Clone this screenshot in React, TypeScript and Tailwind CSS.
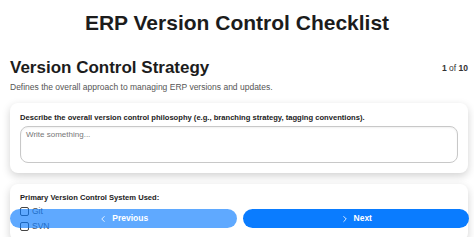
import React, { useState } from 'react';
import { ChevronLeft, ChevronRight } from 'lucide-react';

const options = ['Git', 'SVN'];

const App = () => {
  const [notes, setNotes] = useState('');
  const [picked, setPicked] = useState<string[]>([]);

  const toggle = (name: string) => {
    setPicked((p) => (p.includes(name) ? p.filter((x) => x !== name) : [...p, name]));
  };

  return (
    <div className="min-h-screen bg-white font-['Liberation_Sans',Arial,sans-serif] text-[#222]">
      {/* Page title */}
      <h1 className="pt-[10px] text-center text-[21px] font-bold leading-[25px] text-[#1c1c1c]">
        ERP Version Control Checklist
      </h1>

      <div className="pl-[10px] pr-[6px]">
        {/* Section header */}
        <div className="mt-[23px] flex items-center justify-between">
          <h2 className="text-[17px] font-bold leading-[20px] text-[#1c1c1c]">Version Control Strategy</h2>
          <span className="text-[8.5px] text-[#333]">
            <b>1</b> of <b>10</b>
          </span>
        </div>
        <p className="mt-[4px] text-[8.5px] leading-[11px] text-[#555]">
          Defines the overall approach to managing ERP versions and updates.
        </p>

        {/* Question 1 */}
        <div className="mt-[10px] rounded-lg bg-white px-[10px] pt-[10px] pb-[10px] shadow-[0_3px_8px_rgba(0,0,0,0.18)]">
          <label className="block text-[7.6px] font-bold leading-[10px] text-[#222]">
            Describe the overall version control philosophy (e.g., branching strategy, tagging conventions).
          </label>
          <textarea
            value={notes}
            onChange={(e) => setNotes(e.target.value)}
            placeholder="Write something..."
            className="mt-[3px] block h-[37px] w-full resize-none rounded-lg border border-[#c8c8c8] px-[5px] py-[3px] text-[8px] leading-[10px] text-[#333] placeholder:text-[#777] shadow-[inset_0_1px_2px_rgba(0,0,0,0.06)] outline-none"
          />
        </div>

        {/* Question 2 */}
        <div className="mt-[11px] rounded-lg bg-white px-[10px] pt-[9px] pb-[10px] shadow-[0_3px_8px_rgba(0,0,0,0.18)]">
          <p className="text-[7.6px] font-bold leading-[10px] text-[#222]">Primary Version Control System Used:</p>
          <div className="mt-[4px] flex flex-col gap-[5.5px]">
            {options.map((o) => (
              <label key={o} className="flex items-center gap-[3px] text-[8.5px] leading-[9px] text-[#555]">
                <span
                  onClick={() => toggle(o)}
                  className={`h-[9px] w-[9px] rounded-[2px] border border-[#444] ${picked.includes(o) ? 'bg-[#0a7cff]' : 'bg-white'}`}
                />
                {o}
              </label>
            ))}
          </div>
        </div>
      </div>

      {/* Navigation */}
      <div className="fixed bottom-[9px] left-[10px] right-[5px] flex gap-[6px]">
        <button className="flex h-[19px] flex-1 items-center justify-center gap-[4px] rounded-full bg-[#0a7cff] text-[8.5px] font-bold text-white opacity-[0.65]">
          <ChevronLeft size={10} strokeWidth={2} />
          Previous
        </button>
        <button className="flex h-[19px] flex-1 items-center justify-center gap-[4px] rounded-full bg-[#0a7cff] text-[8.5px] font-bold text-white">
          <ChevronRight size={10} strokeWidth={2} />
          Next
        </button>
      </div>
    </div>
  );
};

export default App;
